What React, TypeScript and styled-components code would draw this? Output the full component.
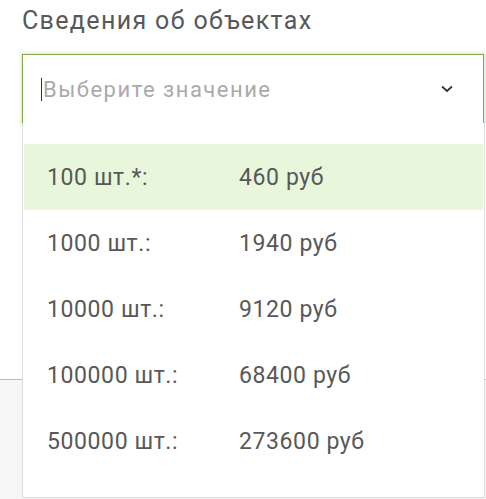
import React from 'react';
import styled, { createGlobalStyle } from 'styled-components';

const TEXT = '#585858';
const GREEN = '#86a84f';

const GlobalStyle = createGlobalStyle`
  html, body {
    margin: 0;
    padding: 0;
    background: #ffffff;
    font-family: Roboto, "Liberation Sans", Arial, sans-serif;
  }
`;

const Page = styled.div`
  position: relative;
  width: 486px;
  height: 499px;
  overflow: hidden;
`;

const Field = styled.div`
  padding: 0 2px 0 22px;
`;

const Title = styled.div`
  height: 54px;
  padding-top: 6px;
  box-sizing: border-box;
  font-size: 25px;
  line-height: 30px;
  letter-spacing: 1.35px;
  color: ${TEXT};
`;

const SelectBox = styled.div`
  position: relative;
  display: flex;
  align-items: center;
  height: 70px;
  box-sizing: border-box;
  padding: 0 30px 0 18px;
  border: 1px solid ${GREEN};
  box-shadow: 0 0 3px 1px rgba(140, 180, 80, 0.35);
  background: #fff;
`;

const Caret = styled.span`
  width: 1px;
  height: 23px;
  background: #333;
  margin-right: 1px;
`;

const Placeholder = styled.span`
  flex: 1;
  font-size: 22px;
  letter-spacing: 1.5px;
  color: #aaaaaa;
`;

const Spacer = styled.div`
  height: 255px;
`;

const Backdrop = styled.div`
  height: 120px;
  border-top: 1px solid #b7c98f;
  background: #f6f6f6;
`;

const Menu = styled.div`
  position: absolute;
  left: 22px;
  top: 123px;
  width: 463px;
  height: 375px;
  box-sizing: border-box;
  padding: 21px 1px;
  background: #fff;
  border: 1px solid #dddddd;
  border-top: none;
`;

const Option = styled.div<{ $active?: boolean }>`
  display: flex;
  align-items: center;
  height: 66px;
  padding-left: 23px;
  font-size: 23px;
  letter-spacing: 0.6px;
  color: ${TEXT};
  background: ${(p) => (p.$active ? '#e8f7dc' : 'transparent')};
`;

const Qty = styled.span`
  width: 192px;
`;

const Chevron = () => (
  <svg width="12" height="8" viewBox="0 0 12 8">
    <path d="M1 1.5 L6 6 L11 1.5" fill="none" stroke="#333" strokeWidth="1.8" />
  </svg>
);

const options = [
  { qty: '100 шт.*:', price: '460 руб' },
  { qty: '1000 шт.:', price: '1940 руб' },
  { qty: '10000 шт.:', price: '9120 руб' },
  { qty: '100000 шт.:', price: '68400 руб' },
  { qty: '500000 шт.:', price: '273600 руб' },
];

const App = () => {
  return (
    <Page>
      <GlobalStyle />
      <Field>
        <Title>Сведения об объектах</Title>
        <SelectBox>
          <Caret />
          <Placeholder>Выберите значение</Placeholder>
          <Chevron />
        </SelectBox>
        <Spacer />
      </Field>
      <Backdrop />
      <Menu>
        {options.map((o, i) => (
          <Option key={o.qty} $active={i === 0}>
            <Qty>{o.qty}</Qty>
            <span>{o.price}</span>
          </Option>
        ))}
      </Menu>
    </Page>
  );
};

export default App;
